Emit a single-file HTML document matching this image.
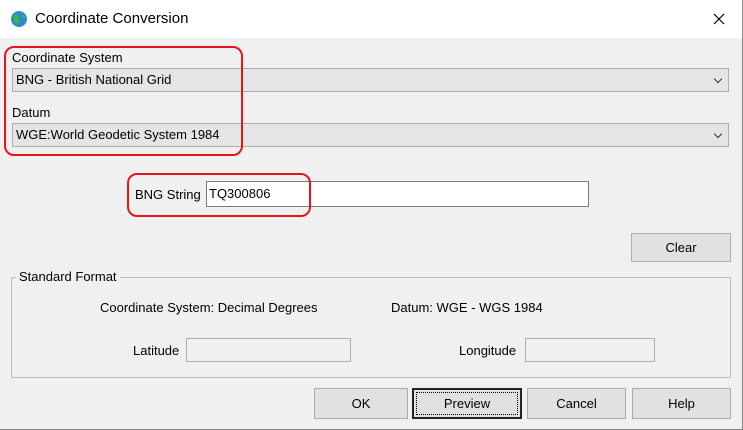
<!DOCTYPE html><html><head><style>
body{margin:0;width:743px;height:430px;background:#f0f0f0;font-family:"Liberation Sans",sans-serif;font-size:13px;color:#000;position:relative;overflow:hidden}
.a{position:absolute}
.combo{position:absolute;left:12px;width:717px;height:24px;background:#e5e5e5;border:1px solid #adadad;box-sizing:border-box;line-height:22px;padding-left:3px}
.combo:after{content:"";position:absolute;right:7px;top:7px;width:5px;height:5px;border-right:1px solid #333;border-bottom:1px solid #333;transform:rotate(45deg)}
.inp{position:absolute;background:#fff;border:1px solid #7a7a7a;box-sizing:border-box}
.btn{position:absolute;background:#e1e1e1;border:1px solid #adadad;box-sizing:border-box;text-align:center;line-height:29px}
.red{position:absolute;border:2.5px solid #e8141c;border-radius:10px;box-sizing:border-box}
</style></head><body>
<div class="a" style="left:0;top:0;width:743px;height:38px;background:#fff"></div>
<svg class="a" style="left:10px;top:10px" width="18" height="18"><circle cx="9" cy="9" r="8" fill="#2a8ad8"/><path d="M4 5 Q8 3 9 7 Q7 10 10 12 Q8 15 5 13 Q3 9 4 5Z M11 3 Q15 5 15 9 Q12 8 11 3Z" fill="#3cb83c"/></svg>
<div class="a" style="left:35px;top:10px;font-size:15px">Coordinate Conversion</div>
<svg class="a" style="left:713px;top:13px" width="12" height="12"><path d="M1 1L11 11M11 1L1 11" stroke="#000" stroke-width="1.2"/></svg>
<div class="a" style="right:0;top:0;width:1px;height:430px;background:#888"></div>
<div class="a" style="left:0;bottom:0;width:743px;height:1px;background:#888"></div>
<div class="a" style="left:12px;top:50px">Coordinate System</div>
<div class="combo" style="top:68px">BNG - British National Grid</div>
<div class="a" style="left:12px;top:105px">Datum</div>
<div class="combo" style="top:123px">WGE:World Geodetic System 1984</div>
<div class="red" style="left:4px;top:46px;width:239px;height:110px"></div>
<div class="a" style="left:135px;top:187px">BNG String</div>
<div class="inp" style="left:206px;top:181px;width:383px;height:26px;padding:4px 2px">TQ300806</div>
<div class="red" style="left:127px;top:173px;width:184px;height:44px"></div>
<div class="btn" style="left:631px;top:233px;width:100px;height:29px;line-height:27px">Clear</div>
<div class="a" style="left:11px;top:277px;width:720px;height:101px;border:1px solid #bbb;box-sizing:border-box"></div>
<div class="a" style="left:16px;top:269px;background:#f0f0f0;padding:0 3px">Standard Format</div>
<div class="a" style="left:100px;top:300px">Coordinate System: Decimal Degrees</div>
<div class="a" style="left:391px;top:300px">Datum: WGE - WGS 1984</div>
<div class="a" style="left:133px;top:343px">Latitude</div>
<div class="inp" style="left:186px;top:338px;width:165px;height:24px;background:#f0f0f0;border-color:#adadad"></div>
<div class="a" style="left:459px;top:343px">Longitude</div>
<div class="inp" style="left:525px;top:338px;width:130px;height:24px;background:#f0f0f0;border-color:#adadad"></div>
<div class="btn" style="left:314px;top:388px;width:94px;height:31px">OK</div>
<div class="btn" style="left:412px;top:388px;width:110px;height:31px;border:2px solid #222;line-height:27px"><div style="margin:2px;border:1px dotted #000;height:21px;line-height:21px">Preview</div></div>
<div class="btn" style="left:527px;top:388px;width:99px;height:31px">Cancel</div>
<div class="btn" style="left:632px;top:388px;width:99px;height:31px">Help</div>
</body></html>
